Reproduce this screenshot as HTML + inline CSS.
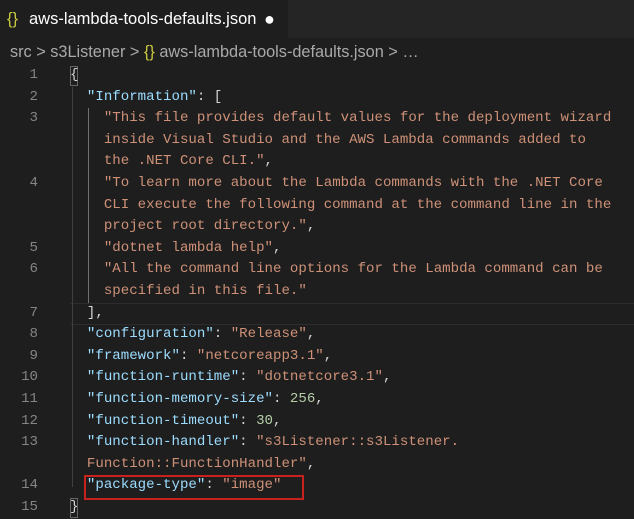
<!DOCTYPE html>
<html><head><meta charset="utf-8"><style>
body{margin:0;width:634px;height:519px;background:#1e1e1e;overflow:hidden;position:relative;font-family:"Liberation Sans",sans-serif}
.tabbar{position:absolute;left:0;top:0;width:634px;height:38px;background:#252526}
.tab{position:absolute;left:0;top:0;width:288px;height:38px;background:#1e1e1e;color:#fff;font-size:16.5px;line-height:38px}
.br{position:absolute;left:10px;top:42px;font-size:16.3px;color:#a9a9a9;line-height:20px;white-space:pre}
.y{color:#cbcb41}
.ln{position:absolute;width:38px;text-align:right;color:#858585;font-family:"Liberation Mono",monospace;font-size:14.1px;line-height:21.6px}
.c{position:absolute;left:70px;font-family:"Liberation Mono",monospace;font-size:14.1px;line-height:21.6px;white-space:pre;color:#d4d4d4}
.k{color:#9cdcfe}.s{color:#ce9178}.n{color:#b5cea8}
</style></head><body>
<div class="tabbar"><div class="tab"><span class="y" style="position:absolute;left:7px">{}</span><span style="position:absolute;left:29px">aws-lambda-tools-defaults.json</span><span style="position:absolute;left:264px;font-size:18px">●</span></div></div>
<div class="br">src &gt; s3Listener &gt; <span class="y">{}</span> aws-lambda-tools-defaults.json &gt; …</div>
<div style="position:absolute;left:70px;top:303px;width:564px;height:20px;border-top:1px solid #2c2c2c;border-bottom:1px solid #2c2c2c"></div>
<div style="position:absolute;left:72px;top:87px;width:1px;height:400px;background:#404040"></div>
<div style="position:absolute;left:88px;top:108px;width:1px;height:195px;background:#707070"></div>
<div style="position:absolute;left:70px;top:66px;width:8px;height:20px;border:1px solid #666;box-sizing:border-box"></div>
<div style="position:absolute;left:70px;top:498px;width:8px;height:20px;border:1px solid #666;box-sizing:border-box"></div>
<div style="position:absolute;left:84px;top:475px;width:220px;height:25px;border:2px solid #c9211e;box-sizing:border-box"></div>
<div class="ln" style="top:65px">1<br>2<br>3<br><br><br>4<br><br><br>5<br>6<br><br>7<br>8<br>9<br>10<br>11<br>12<br>13<br><br>14<br>15</div>
<div class="c" style="top:65px">{
  <span class="k">"Information"</span>: [
    <span class="s">"This file provides default values for the deployment wizard</span>
<span class="s">    inside Visual Studio and the AWS Lambda commands added to</span>
<span class="s">    the .NET Core CLI."</span>,
    <span class="s">"To learn more about the Lambda commands with the .NET Core</span>
<span class="s">    CLI execute the following command at the command line in the</span>
<span class="s">    project root directory."</span>,
    <span class="s">"dotnet lambda help"</span>,
    <span class="s">"All the command line options for the Lambda command can be</span>
<span class="s">    specified in this file."</span>
  ],
  <span class="k">"configuration"</span>: <span class="s">"Release"</span>,
  <span class="k">"framework"</span>: <span class="s">"netcoreapp3.1"</span>,
  <span class="k">"function-runtime"</span>: <span class="s">"dotnetcore3.1"</span>,
  <span class="k">"function-memory-size"</span>: <span class="n">256</span>,
  <span class="k">"function-timeout"</span>: <span class="n">30</span>,
  <span class="k">"function-handler"</span>: <span class="s">"s3Listener::s3Listener.</span>
<span class="s">  Function::FunctionHandler"</span>,
  <span class="k">"package-type"</span>: <span class="s">"image"</span>
}</div>
</body></html>
